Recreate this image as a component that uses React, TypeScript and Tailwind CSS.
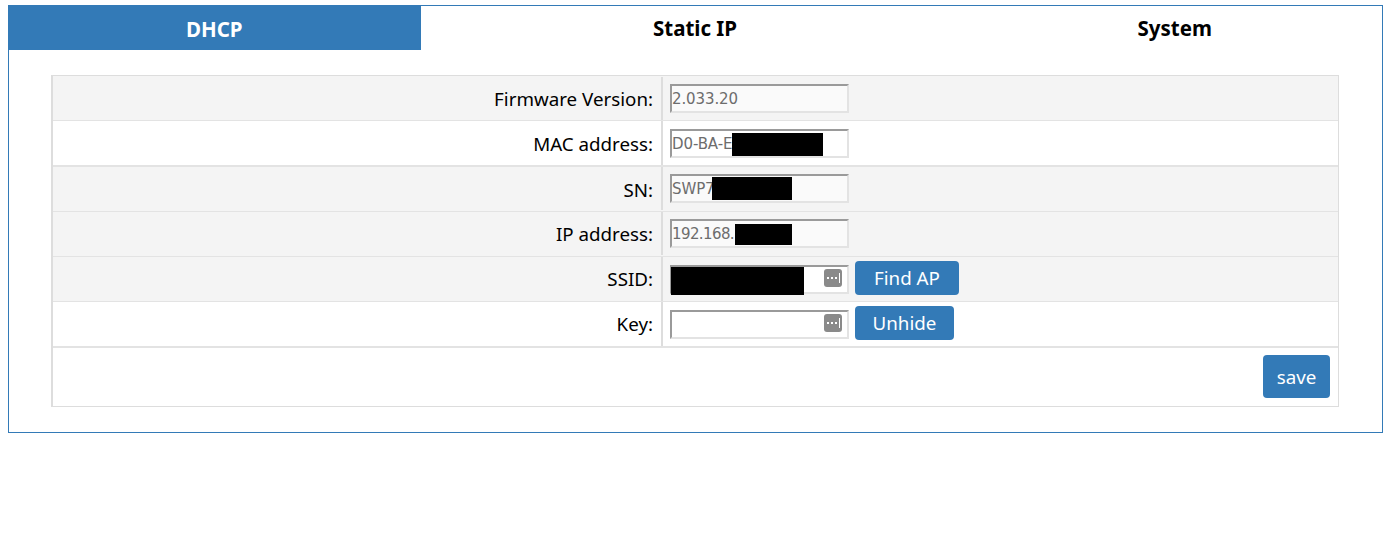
const ROWS = [
  { label: 'Firmware Version:', value: '2.033.20', bg: 'bg-[#f4f4f4]', h: 'h-[45px] pt-px border-b', mask: null, track: 'tracking-[-0.1px]', pad: 'pt-px' },
  { label: 'MAC address:', value: 'D0-BA-E', bg: 'bg-white', h: 'h-[46px] border-b-2', mask: 'left-[60px] top-[2px] w-[91px] h-[23px]', track: 'tracking-[-0.1px]', pad: 'pt-[3px]' },
  { label: 'SN:', value: 'SWP7', bg: 'bg-[#f4f4f4]', h: 'h-[45px] pb-px border-b', mask: 'left-[40px] top-px w-[80px] h-[23px]', track: 'tracking-[-0.1px]', pad: 'pt-[3px]' },
  { label: 'IP address:', value: '192.168.', bg: 'bg-[#f4f4f4]', h: 'h-[45px] pb-px border-b', mask: 'left-[63px] top-[3px] w-[57px] h-[21px]', track: 'tracking-[-0.6px]', pad: 'pt-px' },
]

function Dots() {
  return (
    <svg className="absolute right-[5px] top-[2px]" width="18" height="18" viewBox="0 0 18 18">
      <rect width="18" height="18" rx="3" fill="#8a8a8a" />
      <rect x="3" y="8" width="2" height="2" fill="#fff" />
      <rect x="7" y="8" width="2" height="2" fill="#fff" />
      <rect x="11" y="8" width="2" height="2" fill="#fff" />
      <rect x="15" y="4" width="1" height="10" fill="#fff" />
    </svg>
  )
}

function Field({ value, disabled, mask, dots, track }: { value?: string; disabled?: boolean; mask?: string | null; dots?: boolean; track?: string }) {
  return (
    <div className={`relative w-[179px] h-[29px] border-2 border-t-[#9a9a9a] border-l-[#9a9a9a] border-r-[#e3e3e3] border-b-[#e3e3e3] text-[15px] leading-[27px] text-[#6d6d6d] font-['DejaVu_Sans',sans-serif] ${track} ${disabled ? 'bg-[#fafafa]' : 'bg-white'}`}>
      {value}
      {mask && <div className={`absolute bg-black ${mask}`} />}
      {dots && <Dots />}
    </div>
  )
}

function Label({ text, pad }: { text: string; pad: string }) {
  return (
    <div className={`w-[610px] shrink-0 h-full border-r-2 border-[#dddddd] pr-2 flex items-center justify-end text-[18.75px] text-black ${pad}`}>
      {text}
    </div>
  )
}

function Button({ text, width }: { text: string; width: string }) {
  return (
    <button className={`h-[34px] -mt-[2px] pt-px rounded-[4px] bg-[#337ab7] text-white text-[18.75px] ${width}`}>{text}</button>
  )
}

export default function App() {
  return (
    <div className="pt-[5px] pl-2 pr-1 font-['Noto_Sans',sans-serif] bg-white h-[540px]">
      <div className="border border-[#337ab7] h-[428px]">
        <div className="grid grid-cols-[3fr_4fr_3fr] h-[45px] -mx-px -mt-px pt-px text-[20.5px] font-bold">
          <div className="bg-[#337ab7] text-white flex items-center justify-center -mt-px pt-[3px]">DHCP</div>
          <div className="text-black flex items-center justify-center pr-px">Static IP</div>
          <div className="text-black flex items-center justify-center pr-1">System</div>
        </div>
        <div className="ml-[42px] mr-[43px] mt-[25px] border-t border-l-2 border-r border-b border-[#dddddd]">
          {ROWS.map(r => (
            <div key={r.label} className={`flex items-center border-[#e3e3e3] ${r.bg} ${r.h}`}>
              <Label text={r.label} pad={r.pad} />
              <div className="pl-[7px]">
                <Field value={r.value} disabled={r.bg !== 'bg-white'} mask={r.mask} track={r.track} />
              </div>
            </div>
          ))}
          <div className="flex items-center border-b border-[#e3e3e3] bg-[#f4f4f4] h-[45px]">
            <Label text="SSID:" pad="pt-px" />
            <div className="pl-[7px] flex items-center gap-[6px]">
              <Field mask="left-[-1px] top-0 w-[133px] h-[28px]" dots />
              <Button text="Find AP" width="w-[104px]" />
            </div>
          </div>
          <div className="flex items-center border-b-2 border-[#e3e3e3] bg-white h-[46px]">
            <Label text="Key:" pad="pt-px" />
            <div className="pl-[7px] flex items-center gap-[6px]">
              <Field dots />
              <Button text="Unhide" width="w-[99px]" />
            </div>
          </div>
          <div className="flex justify-end items-start h-[58px] pt-[7px] pr-2 bg-white">
            <button className="w-[67px] h-[43px] pt-px rounded-[4px] bg-[#337ab7] text-white text-[18.75px]">save</button>
          </div>
        </div>
      </div>
    </div>
  )
}
